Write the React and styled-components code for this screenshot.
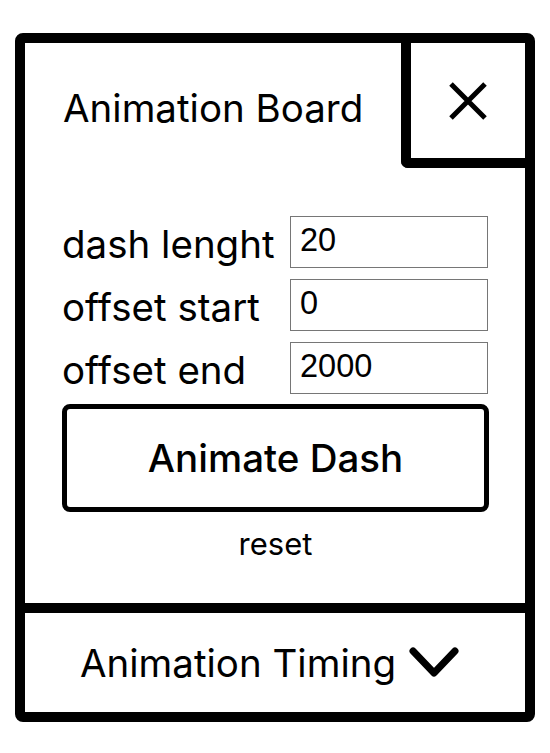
import React, { useState } from "react";
import styled, { createGlobalStyle } from "styled-components";

const Global = createGlobalStyle`
  body {
    margin: 0;
    background: #fff;
    font-family: Inter, Roboto, sans-serif;
    color: #000;
  }
`;

const fields = [
  { label: "dash lenght", value: "20" },
  { label: "offset start", value: "0" },
  { label: "offset end", value: "2000" },
];

const App = () => {
  const [values, setValues] = useState(fields.map((f) => f.value));

  return (
    <Page>
      <Global />
      <Panel>
        <Header>
          <Title>Animation Board</Title>
          <CloseBox aria-label="close">
            <svg width="40" height="40" viewBox="0 0 40 40">
              <path
                d="M3 3 L37 37 M37 3 L3 37"
                stroke="#000"
                strokeWidth="5"
                fill="none"
              />
            </svg>
          </CloseBox>
        </Header>
        <Body>
          <Fields>
            {fields.map((f, i) => (
              <React.Fragment key={f.label}>
                <Label>{f.label}</Label>
                <Input
                  value={values[i]}
                  onChange={(e) =>
                    setValues((v) => v.map((x, j) => (j === i ? e.target.value : x)))
                  }
                />
              </React.Fragment>
            ))}
          </Fields>
          <AnimateButton>Animate Dash</AnimateButton>
          <Reset onClick={() => setValues(fields.map((f) => f.value))}>reset</Reset>
        </Body>
        <Footer>
          <FooterTitle>Animation Timing</FooterTitle>
          <svg width="52" height="34" viewBox="0 0 52 34">
            <path
              d="M5 5 L26 27 L47 5"
              stroke="#000"
              strokeWidth="7"
              strokeLinecap="round"
              strokeLinejoin="round"
              fill="none"
            />
          </svg>
        </Footer>
      </Panel>
    </Page>
  );
};

export default App;

const Page = styled.div`
  padding: 33px 15px;
`;

const Panel = styled.div`
  box-sizing: border-box;
  width: 520px;
  height: 689px;
  border: 10px solid #000;
  border-radius: 8px;
  display: flex;
  flex-direction: column;
`;

const Header = styled.div`
  display: flex;
  height: 125px;
`;

const Title = styled.h1`
  flex: 1;
  margin: 0;
  padding-left: 38px;
  padding-top: 4px;
  display: flex;
  align-items: center;
  font-size: 38.5px;
  font-weight: 400;
`;

const CloseBox = styled.div`
  box-sizing: border-box;
  width: 124px;
  height: 125px;
  border-left: 10px solid #000;
  border-bottom: 10px solid #000;
  border-bottom-left-radius: 7px;
  display: flex;
  align-items: center;
  justify-content: center;
  cursor: pointer;
`;

const Body = styled.div`
  height: 435px;
  box-sizing: border-box;
  padding: 48px 36px 0 37px;
  display: flex;
  flex-direction: column;
`;

const Fields = styled.div`
  display: grid;
  grid-template-columns: 228px 198px;
  grid-auto-rows: 52px;
  row-gap: 11px;
  align-items: center;
`;

const Label = styled.label`
  font-size: 38.5px;
  white-space: nowrap;
  padding-top: 4px;
`;

const Input = styled.input`
  box-sizing: border-box;
  height: 52px;
  width: 198px;
  border: 1px solid #767676;
  padding: 0 9px 4px;
  font-family: "Liberation Sans", Arial, sans-serif;
  font-size: 32.5px;
  color: #000;
  outline: none;
`;

const AnimateButton = styled.button`
  box-sizing: border-box;
  margin-top: 10px;
  width: 427px;
  height: 108px;
  border: 5px solid #000;
  border-radius: 8px;
  background: #fff;
  font-family: Inter, Roboto, sans-serif;
  font-size: 38.5px;
  font-weight: 500;
  color: #000;
  cursor: pointer;
`;

const Reset = styled.button`
  align-self: center;
  margin-top: 13px;
  border: none;
  background: none;
  padding: 0;
  font-family: Inter, Roboto, sans-serif;
  font-size: 31px;
  color: #000;
  cursor: pointer;
`;

const Footer = styled.div`
  flex: 1;
  border-top: 10px solid #000;
  display: flex;
  align-items: center;
  justify-content: center;
  gap: 12px;
  padding-right: 10px;
`;

const FooterTitle = styled.span`
  font-size: 38.5px;
`;
